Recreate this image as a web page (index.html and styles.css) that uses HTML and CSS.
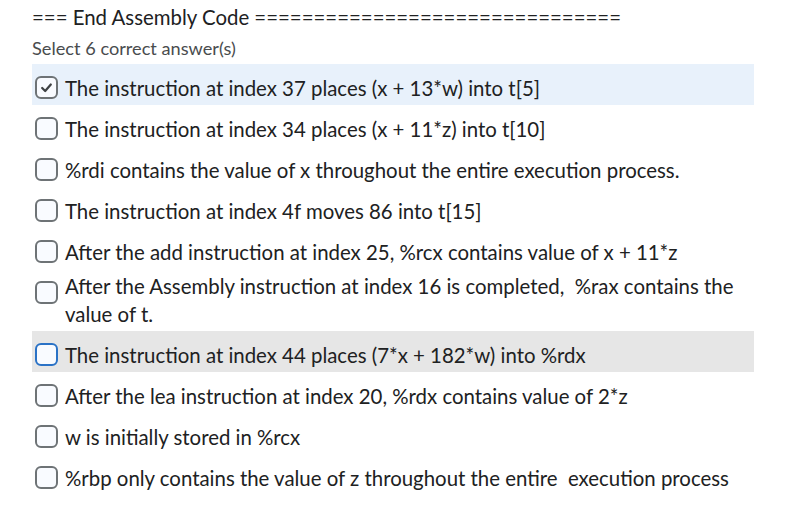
FILE: index.html
```html
<!DOCTYPE html>
<html>
<head>
<meta charset="utf-8">
<link rel="stylesheet" href="styles.css">
</head>
<body>
<div class="page">
  <div class="title">=== End Assembly Code ===============================</div>
  <div class="hint">Select 6 correct answer(s)</div>
  <div class="options">
    <div class="opt selected">
      <span class="box checked"><svg viewBox="0 0 22 22" width="22" height="22"><path d="M6 11.5 L9.5 15 L16 7.5" fill="none" stroke="#3f4244" stroke-width="2.6" stroke-linecap="round" stroke-linejoin="round"/></svg></span>
      <span class="label">The instruction at index 37 places (x + 13*w) into t[5]</span>
    </div>
    <div class="opt"><span class="box"></span><span class="label">The instruction at index 34 places (x + 11*z) into t[10]</span></div>
    <div class="opt"><span class="box"></span><span class="label">%rdi contains the value of x throughout the entire execution process.</span></div>
    <div class="opt"><span class="box"></span><span class="label">The instruction at index 4f moves 86 into t[15]</span></div>
    <div class="opt"><span class="box"></span><span class="label">After the add instruction at index 25, %rcx contains value of x + 11*z</span></div>
    <div class="opt multi"><span class="box"></span><span class="label">After the Assembly instruction at index 16 is completed,&nbsp; %rax contains the value of t.</span></div>
    <div class="opt hover"><span class="box focus"></span><span class="label">The instruction at index 44 places (7*x + 182*w) into %rdx</span></div>
    <div class="opt"><span class="box"></span><span class="label">After the lea instruction at index 20, %rdx contains value of 2*z</span></div>
    <div class="opt"><span class="box"></span><span class="label">w is initially stored in %rcx</span></div>
    <div class="opt"><span class="box"></span><span class="label">%rbp only contains the value of z throughout the entire&nbsp; execution process</span></div>
  </div>
</div>
</body>
</html>
```
FILE: styles.css
```css
html, body {
  margin: 0;
  padding: 0;
  background: #ffffff;
}
body {
  font-family: Lato, "Noto Sans", sans-serif;
  color: #202122;
}
.page {
  padding: 3px 0 0 32px;
  width: 722px;
}
.title {
  font-size: 20.4px;
  line-height: 28px;
  white-space: nowrap;
}
.hint {
  font-size: 18.2px;
  line-height: 26px;
  color: #494c4e;
  margin-top: 4px;
  margin-bottom: 3px;
}
.options {
  display: flex;
  flex-direction: column;
}
.opt {
  display: flex;
  align-items: flex-start;
  min-height: 41px;
  box-sizing: border-box;
  padding: 0 0 0 3px;
}
.opt.selected {
  background: #e8f1fb;
}
.opt.hover {
  background: #e6e6e6;
}
.box {
  flex: none;
  width: 19px;
  height: 19px;
  margin-top: 12px;
  border: 2px solid #6e7376;
  border-radius: 6px;
  background: #f9fbff;
  display: flex;
  align-items: center;
  justify-content: center;
}
.box svg {
  width: 19px;
  height: 19px;
}
.box.focus {
  border-color: #2a72c6;
}
.label {
  font-size: 20.4px;
  line-height: 28px;
  padding: 10px 0 3px 7px;
}
.opt.multi .label {
  padding: 3px 0 3px 7px;
}
```
